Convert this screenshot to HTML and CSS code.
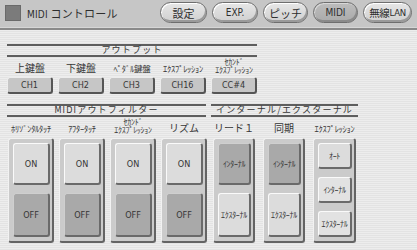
FILE: index.html
```html
<!DOCTYPE html>
<html lang="ja">
<head>
<meta charset="utf-8">
<title>MIDI コントロール</title>
<link rel="stylesheet" href="styles.css">
</head>
<body>
<header class="topbar">
  <span class="app-icon"></span>
  <span class="app-title"><span class="lat">MIDI</span> コントロール</span>
  <nav class="tabs">
    <span class="tab w47">設定</span>
    <span class="tab w46"><span class="lat">EXP.</span></span>
    <span class="tab w45">ピッチ</span>
    <span class="tab w45 active"><span class="lat">MIDI</span></span>
    <span class="tab w49 narrow">無線<span class="lat">LAN</span></span>
  </nav>
</header>
<main class="main">
  <section class="group output">
    <div class="group-title">アウトプット</div>
    <div class="cols cols-out">
      <div class="col"><div class="label">上鍵盤</div><div class="chbtn">CH1</div></div>
      <div class="col"><div class="label">下鍵盤</div><div class="chbtn">CH2</div></div>
      <div class="col"><div class="label hw">ﾍﾟﾀﾞﾙ鍵盤</div><div class="chbtn">CH3</div></div>
      <div class="col"><div class="label hw">ｴｸｽﾌﾟﾚｯｼｮﾝ</div><div class="chbtn">CH16</div></div>
      <div class="col"><div class="label hw two"><span class="ln">ｾｶﾝﾄﾞ</span><span class="ln">ｴｸｽﾌﾟﾚｯｼｮﾝ</span></div><div class="chbtn">CC#4</div></div>
    </div>
  </section>
  <div class="row2">
    <section class="group filter">
      <div class="group-title"><span class="lat">MIDI</span>アウトフィルター</div>
      <div class="cols cols-filter">
        <div class="col"><div class="label hw">ﾎﾘｿﾞﾝﾀﾙﾀｯﾁ</div>
          <div class="panel"><div class="pbtn light">ON</div><div class="pbtn dark">OFF</div></div></div>
        <div class="col"><div class="label hw">ｱﾌﾀｰﾀｯﾁ</div>
          <div class="panel"><div class="pbtn light">ON</div><div class="pbtn dark">OFF</div></div></div>
        <div class="col"><div class="label hw two"><span class="ln">ｾｶﾝﾄﾞ</span><span class="ln">ｴｸｽﾌﾟﾚｯｼｮﾝ</span></div>
          <div class="panel"><div class="pbtn light">ON</div><div class="pbtn dark">OFF</div></div></div>
        <div class="col"><div class="label">リズム</div>
          <div class="panel"><div class="pbtn light">ON</div><div class="pbtn dark">OFF</div></div></div>
      </div>
    </section>
    <section class="group intext">
      <div class="group-title">インターナル/エクスターナル</div>
      <div class="cols cols-int">
        <div class="col"><div class="label">リード１</div>
          <div class="panel"><div class="pbtn dark hw">ｲﾝﾀｰﾅﾙ</div><div class="pbtn light hw">ｴｸｽﾀｰﾅﾙ</div></div></div>
        <div class="col"><div class="label">同期</div>
          <div class="panel"><div class="pbtn dark hw">ｲﾝﾀｰﾅﾙ</div><div class="pbtn light hw">ｴｸｽﾀｰﾅﾙ</div></div></div>
        <div class="col"><div class="label hw">ｴｸｽﾌﾟﾚｯｼｮﾝ</div>
          <div class="panel three"><div class="pbtn light hw">ｵｰﾄ</div><div class="pbtn lighter hw">ｲﾝﾀｰﾅﾙ</div><div class="pbtn lighter hw">ｴｸｽﾀｰﾅﾙ</div></div></div>
      </div>
    </section>
  </div>
</main>
</body>
</html>
```
FILE: styles.css
```css
* { box-sizing: border-box; }
html, body { margin: 0; padding: 0; }
body {
  width: 417px;
  height: 250px;
  overflow: hidden;
  font-family: "Noto Sans CJK JP", sans-serif;
  color: #363636;
  background: repeating-linear-gradient(180deg, #ededed 0 1px, #e3e3e3 1px 2px);
}
.lat {
  font-family: "DejaVu Sans Condensed", "Liberation Sans Narrow", "Liberation Sans", sans-serif;
}
.topbar {
  height: 30px;
  display: flex;
  align-items: center;
  padding: 0 5px 3px 5px;
  background: #c6c6c6;
  border-bottom: 2px solid #8a8a8a;
  box-shadow: inset 0 -1px 0 #d6d6d6;
}
.app-icon {
  flex: none;
  width: 16px;
  height: 16px;
  background: #7b7b7b;
  border: 1px solid #6a6a6a;
  margin-right: 6px;
}
.app-title {
  font-size: 11px;
  letter-spacing: 0.2px;
  color: #2e2e2e;
  white-space: nowrap;
}
.app-title .lat { font-size: 10px; }
.tabs {
  margin-left: auto;
  display: flex;
  gap: 5px;
  flex: none;
}
.tab {
  flex: none;
  height: 21px;
  border-radius: 11px;
  display: flex;
  align-items: center;
  justify-content: center;
  font-size: 11px;
  color: #2e2e2e;
  white-space: nowrap;
  overflow: hidden;
  background: linear-gradient(180deg, #e6e6e6, #d0d0d0);
  border: 1px solid #6e6e6e;
  box-shadow: inset 1px 1px 0 #ffffff, inset -1px -2px 0 #9a9a9a;
}
.tab .lat { font-size: 10px; }
.tab.narrow { font-size: 10.5px; letter-spacing: -0.3px; }
.tab.narrow .lat { font-size: 9.5px; }
.tab.active {
  background: linear-gradient(180deg, #bcbcbc, #aaaaaa);
  box-shadow: inset 1px 1px 0 #d8d8d8, inset -1px -2px 0 #8a8a8a;
}
.w45 { width: 45px; }
.w46 { width: 46px; }
.w47 { width: 47px; }
.w49 { width: 49px; }

.main {
  padding: 14px 0 0 7px;
}
.group-title {
  height: 13px;
  border-top: 2px solid #5e5e5e;
  border-bottom: 2px solid #5e5e5e;
  font-size: 9px;
  line-height: 8px;
  text-align: center;
  color: #363636;
  letter-spacing: 1.2px;
  white-space: nowrap;
}
.output { width: 250px; }
.cols { display: grid; }
.cols-out { grid-template-columns: repeat(5, 46px); column-gap: 5px; }
.cols-filter { grid-template-columns: repeat(4, 46px); column-gap: 5px; padding-left: 1px; }
.cols-int { grid-template-columns: 42px 42px 43px; column-gap: 8px; padding-left: 2px; }
.col { display: flex; flex-direction: column; }
.label {
  height: 18px;
  display: flex;
  flex-direction: column;
  justify-content: flex-end;
  align-items: center;
  text-align: center;
  font-size: 10px;
  line-height: 10px;
  padding-bottom: 2px;
  white-space: nowrap;
  color: #363636;
}
.label.hw { font-size: 8.5px; letter-spacing: -0.3px; }
.label.two { font-size: 8px; padding-bottom: 1px; }
.label.two .ln { display: block; height: 8px; line-height: 8px; }
.chbtn {
  margin-top: 2px;
  height: 17px;
  display: flex;
  align-items: center;
  justify-content: center;
  font-family: "DejaVu Sans Condensed", "Liberation Sans Narrow", "Liberation Sans", sans-serif;
  font-size: 9px;
  color: #363636;
  background: #c6c6c6;
  border-radius: 3px;
  border-top: 1px solid #ececec;
  border-left: 1px solid #ececec;
  border-right: 2px solid #555;
  border-bottom: 2px solid #555;
}

.row2 {
  display: flex;
  gap: 5px;
  margin-top: 10px;
}
.filter { width: 199px; }
.intext { width: 147px; }
.panel {
  margin-top: 3px;
  height: 105px;
  padding: 4px 2px 4px 4px;
  display: flex;
  flex-direction: column;
  gap: 8px;
  background: #cbcbcb;
  border-radius: 3px;
  border-top: 1px solid #f2f2f2;
  border-left: 1px solid #f2f2f2;
  border-right: 2px solid #646464;
  border-bottom: 2px solid #646464;
}
.pbtn {
  height: 42px;
  flex: none;
  display: flex;
  align-items: center;
  justify-content: center;
  font-family: "DejaVu Sans Condensed", "Liberation Sans Narrow", "Liberation Sans", sans-serif;
  font-size: 9px;
  color: #363636;
  border-radius: 3px;
  border-top: 1px solid #fafafa;
  border-left: 1px solid #fafafa;
  border-right: 2px solid #6a6a6a;
  border-bottom: 2px solid #6a6a6a;
}
.pbtn.hw { font-family: "Noto Sans CJK JP", sans-serif; font-size: 8px; letter-spacing: -0.3px; }
.pbtn.light { background: #dcdcdc; }
.pbtn.lighter { background: #e2e2e2; }
.pbtn.dark {
  background: #a9a9a9;
  border-top-color: #cfcfcf;
  border-left-color: #cfcfcf;
}
.panel > .pbtn:last-child { height: 44px; }
.panel.three .pbtn,
.panel.three .pbtn:last-child { height: 26px; }
```
